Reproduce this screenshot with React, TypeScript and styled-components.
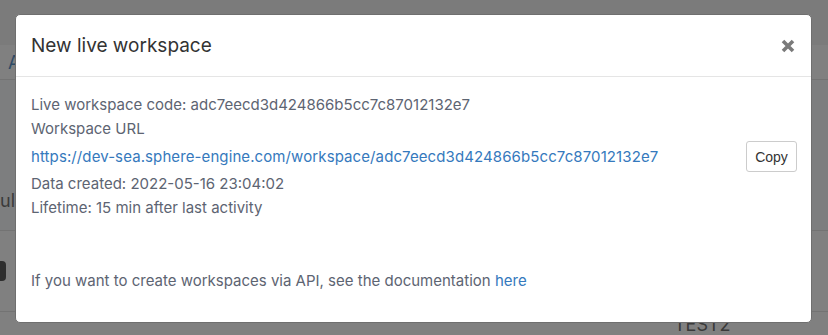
import React from "react";
import styled, { createGlobalStyle } from "styled-components";

const Global = createGlobalStyle`
  html, body { margin: 0; padding: 0; }
  body { font-family: Inter, "Noto Sans", sans-serif; background: #7f7f7f; }
`;

const Page = styled.div`
  position: relative;
  width: 828px;
  height: 335px;
  overflow: hidden;
  background: #808080;
  display: flex;
  flex-direction: column;
`;

const Band = styled.div<{ $h: number; $bg: string; $border?: boolean }>`
  height: ${(p) => p.$h}px;
  background: ${(p) => p.$bg};
  border-bottom: ${(p) => (p.$border ? "1px solid #737373" : "none")};
  display: flex;
  align-items: center;
  font-size: 15px;
  color: #3d3d3d;
  flex-shrink: 0;
`;

const BgText = styled.span<{ $color: string; $ml: number; $mt?: number }>`
  margin-left: ${(p) => p.$ml}px;
  margin-top: ${(p) => p.$mt ?? 0}px;
  color: ${(p) => p.$color};
  font-size: 18px;
`;

const Badge = styled.span`
  width: 6px;
  height: 20px;
  border-radius: 0 4px 4px 0;
  background: #2e2e2e;
`;

const Overlay = styled.div`
  position: absolute;
  inset: 0;
  padding: 14px 16px 0 15px;
`;

const Modal = styled.div`
  width: 797px;
  height: 309px;
  box-sizing: border-box;
  background: #fff;
  border: 1px solid #6f6f6f;
  border-radius: 5px;
  display: flex;
  flex-direction: column;
`;

const Header = styled.div`
  height: 62px;
  box-sizing: border-box;
  border-bottom: 1px solid #e5e5e5;
  display: flex;
  align-items: center;
  justify-content: space-between;
  padding: 0 15px 0 15px;
`;

const Title = styled.h4`
  margin: 0;
  font-size: 19px;
  font-weight: 400;
  color: #333;
`;

const Close = styled.button`
  border: 0;
  background: none;
  padding: 0;
  width: 16px;
  height: 16px;
  display: flex;
  align-items: center;
  justify-content: center;
  cursor: pointer;
`;

const Body = styled.div`
  padding: 16px 14px 0 15px;
  display: flex;
  flex-direction: column;
  font-size: 15px;
  color: #5d6472;
`;

const Line = styled.div`
  height: 24px;
  line-height: 24px;
`;

const UrlRow = styled.div`
  display: flex;
  align-items: center;
  justify-content: space-between;
  height: 31px;
`;

const Link = styled.a<{ $spaced?: boolean }>`
  color: #3579bd;
  text-decoration: none;
  letter-spacing: ${(p) => (p.$spaced ? "0.1px" : "0")};
`;

const CopyButton = styled.button`
  font-family: "Liberation Sans", Arial, sans-serif;
  font-size: 14px;
  color: #333;
  background: #fff;
  border: 1px solid #ccc;
  border-radius: 3px;
  width: 51px;
  height: 31px;
  padding: 0;
`;

const Spacer = styled.div`
  height: 49px;
`;

export default function App() {
  return (
    <>
      <Global />
      <Page>
        <Band $h={45} $bg="#7b7b7b" />
        <Band $h={34} $bg="#808080" $border>
          <BgText $color="#2d4a66" $ml={8}>A</BgText>
        </Band>
        <Band $h={150} $bg="#7d7e7f" $border>
          <BgText $color="#3a3a3a" $ml={0} $mt={90}>ule</BgText>
        </Band>
        <Band $h={80} $bg="#808080" $border>
          <Badge />
        </Band>
        <Band $h={25} $bg="#808080">
          <BgText $color="#3a3a3a" $ml={674}>TEST2</BgText>
        </Band>
        <Overlay>
          <Modal>
            <Header>
              <Title>New live workspace</Title>
              <Close aria-label="Close">
                <svg width="14" height="14" viewBox="0 0 14 14">
                  <path d="M2 2 L12 12 M12 2 L2 12" stroke="#7a7a7a" strokeWidth="3.6" strokeLinecap="butt" />
                </svg>
              </Close>
            </Header>
            <Body>
              <Line>Live workspace code: adc7eecd3d424866b5cc7c87012132e7</Line>
              <Line>Workspace URL</Line>
              <UrlRow>
                <Link href="#" $spaced>https://dev-sea.sphere-engine.com/workspace/adc7eecd3d424866b5cc7c87012132e7</Link>
                <CopyButton>Copy</CopyButton>
              </UrlRow>
              <Line>Data created: 2022-05-16 23:04:02</Line>
              <Line>Lifetime: 15 min after last activity</Line>
              <Spacer />
              <Line>
                If you want to create workspaces via API, see the documentation <Link href="#">here</Link>
              </Line>
            </Body>
          </Modal>
        </Overlay>
      </Page>
    </>
  );
}
